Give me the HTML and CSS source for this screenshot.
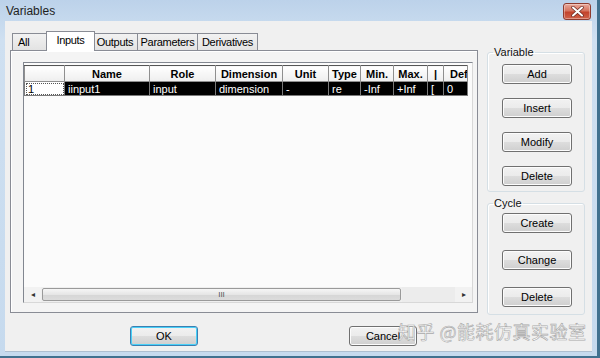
FILE: index.html
```html
<!DOCTYPE html>
<html lang="en">
<head>
    <meta charset="UTF-8">
    <title>Variables</title>
    <link rel="stylesheet" href="styles.css">
</head>
<body>

<div class="window">
    <div class="titlebar">
        <span class="title">Variables</span>
        <span class="close-btn">
            <svg width="13" height="11" viewBox="0 0 13 11">
                <path d="M2 1.5 L11 9.5 M11 1.5 L2 9.5" stroke="#6b2a22" stroke-width="3.4" stroke-linecap="round"/>
                <path d="M2 1.5 L11 9.5 M11 1.5 L2 9.5" stroke="#ffffff" stroke-width="2" stroke-linecap="round"/>
            </svg>
        </span>
    </div>

    <div class="client">
        <div class="main">
            <div class="tabs-area">
                <div class="tab-strip">
                    <div class="tab tab-all">All</div>
                    <div class="tab active">Inputs</div>
                    <div class="tab tab-out">Outputs</div>
                    <div class="tab tab-wide">Parameters</div>
                    <div class="tab tab-wide">Derivatives</div>
                </div>
                <div class="tab-panel">
                    <div class="grid">
                        <table class="var-table">
                            <colgroup>
                                <col style="width: 40px">
                                <col style="width: 85px">
                                <col style="width: 66px">
                                <col style="width: 67px">
                                <col style="width: 46px">
                                <col style="width: 32px">
                                <col style="width: 33px">
                                <col style="width: 34px">
                                <col style="width: 16px">
                                <col style="width: 24px">
                            </colgroup>
                            <tr class="head-row">
                                <th></th>
                                <th>Name</th>
                                <th>Role</th>
                                <th>Dimension</th>
                                <th>Unit</th>
                                <th>Type</th>
                                <th>Min.</th>
                                <th>Max.</th>
                                <th>|</th>
                                <th class="clip">Def</th>
                            </tr>
                            <tr class="sel-row">
                                <td class="row-head">1</td>
                                <td>iinput1</td>
                                <td>input</td>
                                <td>dimension</td>
                                <td>-</td>
                                <td>re</td>
                                <td>-Inf</td>
                                <td>+Inf</td>
                                <td>[</td>
                                <td>0</td>
                            </tr>
                        </table>
                        <div class="grid-fill"></div>
                        <div class="hscroll">
                            <div class="arrow">&#9666;</div>
                            <div class="thumb"><span class="grip">III</span></div>
                            <div class="track"></div>
                            <div class="arrow">&#9656;</div>
                        </div>
                    </div>
                </div>
            </div>

            <div class="side">
                <fieldset class="group group-var">
                    <legend>Variable</legend>
                    <button class="btn">Add</button>
                    <button class="btn">Insert</button>
                    <button class="btn">Modify</button>
                    <button class="btn">Delete</button>
                </fieldset>
                <fieldset class="group group-cycle">
                    <legend>Cycle</legend>
                    <button class="btn">Create</button>
                    <button class="btn">Change</button>
                    <button class="btn">Delete</button>
                </fieldset>
            </div>
        </div>

        <div class="bottom-row">
            <button class="btn btn-default">OK</button>
            <button class="btn btn-cancel">Cancel</button>
        </div>

        <div class="watermark">知乎 @能耗仿真实验室</div>
    </div>
</div>

</body>
</html>
```

FILE: styles.css
```css
body {
    margin: 0;
    font-family: "Liberation Sans", Arial, sans-serif;
    font-size: 11px;
    color: #000;
    background: #c8dbee;
}

.window {
    width: 600px;
    height: 358px;
    background: linear-gradient(to bottom, #bcd2ea, #cfe0f1 40px, #c6daee);
    box-shadow: inset -3px -2px 0 #41718f;
    overflow: hidden;
}

.titlebar {
    height: 21px;
    display: flex;
    align-items: center;
    justify-content: space-between;
    padding: 0 9px 0 6px;
}

.title {
    font-size: 12px;
    color: #1e1e1e;
    padding-top: 1px;
}

.close-btn {
    width: 26px;
    height: 15px;
    margin-top: 2px;
    border: 1px solid #8e3b2f;
    border-radius: 3px;
    background: linear-gradient(to bottom, #e9a99b, #d6745f 45%, #c3432c 55%, #d0624a);
    display: flex;
    align-items: center;
    justify-content: center;
    box-shadow: inset 0 0 0 1px rgba(255, 255, 255, 0.35);
}

.client {
    position: relative;
    margin: 0 8px 0 5px;
    height: 331px;
    background: #f0f0f0;
    padding-top: 10px;
    box-sizing: border-box;
    border-bottom: 1px solid #aebfd0;
}

.main {
    display: flex;
}

.tabs-area {
    margin-left: 5px;
    width: 468px;
}

.tab-strip {
    display: flex;
    height: 19px;
    align-items: flex-end;
    padding-left: 2px;
}

.tab {
    box-sizing: border-box;
    height: 17px;
    line-height: 16px;
    text-align: center;
    letter-spacing: -0.3px;
    border: 1px solid #898c95;
    border-bottom: none;
    margin-right: -1px;
    background: linear-gradient(to bottom, #f2f2f2, #e3e3e3);
    white-space: nowrap;
}

.tab-all {
    width: 37px;
    text-align: left;
    padding-left: 5px;
}

.tab-out {
    width: 46px;
}

.tab-wide {
    width: 61px;
}

.tab.active {
    position: relative;
    z-index: 2;
    width: 49px;
    height: 20px;
    margin: 0 -3px -1px -2px;
    background: #ffffff;
    line-height: 16px;
}

.tab-panel {
    height: 263px;
    box-sizing: border-box;
    border: 1px solid #898c95;
    background: #f4f4f4;
    padding: 11px 4px 9px 12px;
    box-shadow: inset 1px 1px 0 #ffffff;
}

.grid {
    height: 241px;
    box-sizing: border-box;
    border: 1px solid #828790;
    border-right-color: #d8d8d8;
    border-bottom-color: #d8d8d8;
    background: #fbfbfb;
    display: flex;
    flex-direction: column;
    padding-top: 2px;
}

.var-table {
    border-collapse: collapse;
    table-layout: fixed;
    width: 443px;
}

.var-table th,
.var-table td {
    border: 1px solid #8f8f8f;
    white-space: nowrap;
    overflow: hidden;
    padding: 0 3px;
}

.head-row th {
    height: 15px;
    background: linear-gradient(to bottom, #ffffff, #eeeeee);
    font-weight: bold;
    text-align: center;
    border-top-color: #555;
}

.head-row th.clip {
    text-align: left;
    padding-left: 6px;
}

.sel-row td {
    height: 13px;
    background: #000;
    color: #fff;
    border-color: #7a7a7a;
    border-top-color: #000;
}

.sel-row td.row-head {
    background: #fff;
    color: #000;
    outline: 1px dotted #555;
    outline-offset: -2px;
}

.grid-fill {
    flex: 1;
}

.hscroll {
    height: 15px;
    display: flex;
    background: #efefef;
}

.hscroll .arrow {
    width: 17px;
    text-align: center;
    font-size: 8px;
    line-height: 15px;
    color: #333;
    background: #f2f2f2;
}

.thumb {
    width: 359px;
    margin: 1px;
    border: 1px solid #9a9a9a;
    border-radius: 2px;
    background: linear-gradient(to bottom, #f6f6f6, #e6e6e6 50%, #d6d6d6 51%, #dcdcdc);
    text-align: center;
    line-height: 11px;
    font-size: 8px;
    color: #555;
    box-sizing: border-box;
}

.track {
    flex: 1;
    background: #ececec;
}

.side {
    margin: 15px 0 0 9px;
    width: 98px;
}

.group {
    margin: 0;
    border: 1px solid #d5dfe5;
    border-radius: 3px;
    box-shadow: inset 1px 1px 0 #ffffff;
    display: flex;
    flex-direction: column;
    min-width: 0;
}

.group legend {
    padding: 0 1px;
    margin-left: -9px;
    line-height: 13px;
    color: #111;
}

.group-var {
    padding: 5px 12px 5px 14px;
    gap: 14px;
}

.group-cycle {
    margin-top: 5px;
    padding: 3px 12px 7px 14px;
    gap: 17px;
}

.btn {
    width: 70px;
    height: 20px;
    font-family: "Liberation Sans", Arial, sans-serif;
    font-size: 11px;
    color: #000;
    border: 1px solid #707070;
    border-radius: 3px;
    background: linear-gradient(to bottom, #f2f2f2, #ebebeb 50%, #dddddd 51%, #cfcfcf);
    box-shadow: inset 0 0 0 1px #fcfcfc;
    padding: 0;
}

.bottom-row {
    display: flex;
    margin-top: 11px;
    padding-left: 125px;
}

.btn-default {
    width: 68px;
    border-color: #3c7fb1;
    box-shadow: inset 0 0 0 1px #48d0f8;
}

.btn-cancel {
    width: 68px;
    margin-left: 151px;
}

.watermark {
    position: absolute;
    left: 393px;
    top: 297px;
    font-family: "Noto Sans CJK SC", sans-serif;
    font-size: 18px;
    letter-spacing: 0.5px;
    color: rgba(255, 255, 255, 0.9);
    -webkit-text-stroke: 0.6px #a8a8a8;
}
```
